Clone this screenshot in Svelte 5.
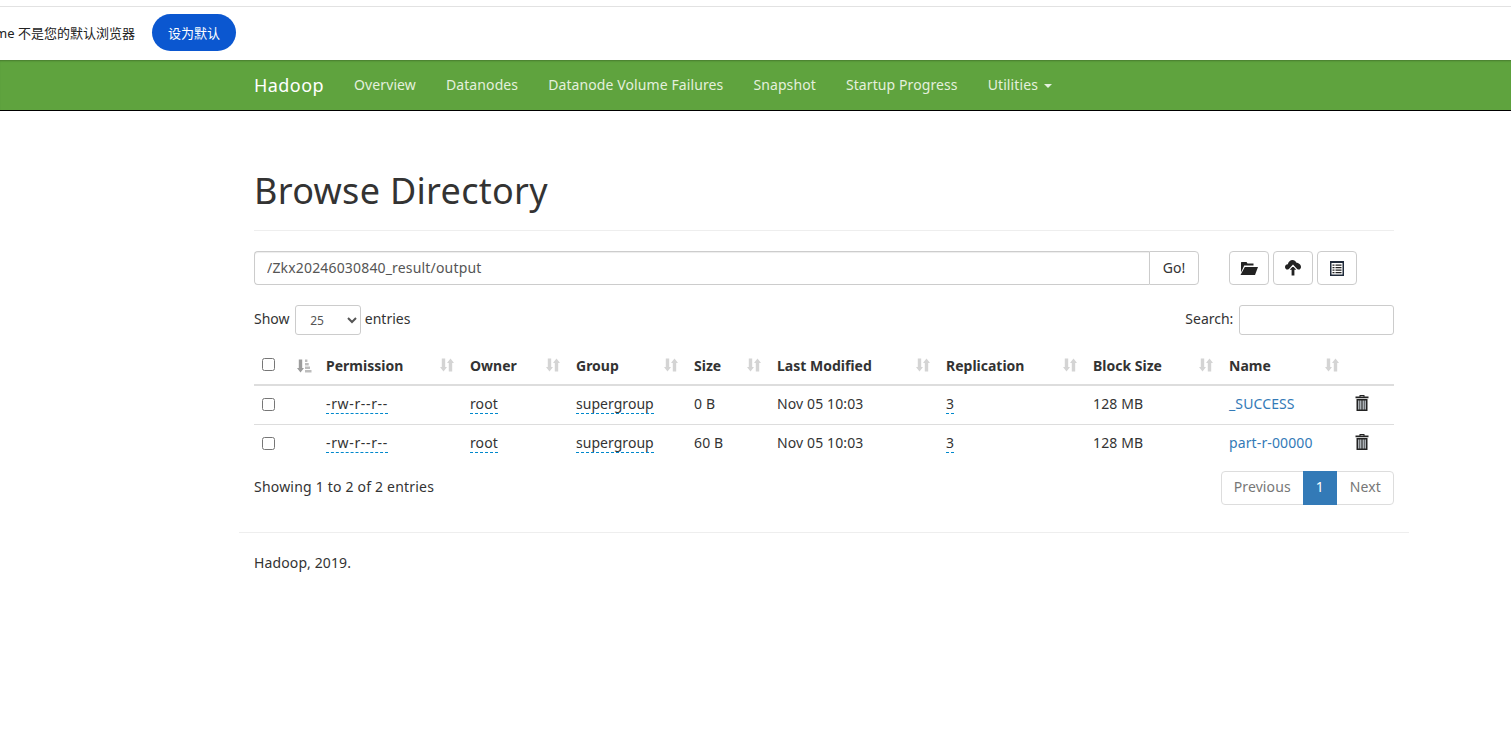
<script>
  const nav = ['Overview', 'Datanodes', 'Datanode Volume Failures', 'Snapshot', 'Startup Progress'];
  const cols = [
    ['Permission', 144], ['Owner', 106], ['Group', 118], ['Size', 83],
    ['Last Modified', 169], ['Replication', 147], ['Block Size', 136], ['Name', 126]
  ];
  const rows = [
    { size: '0 B', name: '_SUCCESS' },
    { size: '60 B', name: 'part-r-00000' }
  ];
</script>

{#snippet sortIcon(x)}
  <svg class="sort" style="left:{x}px" width="14" height="14" viewBox="0 0 14 14" fill="#d4d4d4">
    <path d="M1.800 0.500h3.400v8.500h1.800L3.500 13.500 0 9h1.800zM8.800 13.500h3.400V5H14L10.500 0.500 7 5h1.800z" />
  </svg>
{/snippet}

<div class="page">
  <div class="infobar">
    <div class="clip"><span>Google Chrome 不是您的默认浏览器</span></div>
    <button class="default">设为默认</button>
  </div>

  <nav class="navbar">
    <div class="container navrow">
      <a class="brand" href="#top">Hadoop</a>
      {#each nav as item}<a class="navlink" href="#top">{item}</a>{/each}
      <a class="navlink" href="#top">Utilities <i class="caret"></i></a>
    </div>
  </nav>

  <main class="container">
    <h1>Browse Directory</h1>

    <div class="pathrow">
      <div class="pathgroup">
        <input class="path" value="/Zkx20246030840_result/output" />
        <button class="btn go">Go!</button>
      </div>
      <div class="tools">
        <button class="btn tool" aria-label="Create directory">
          <svg width="18" height="13" viewBox="0 0 18 13" fill="#222"><path d="M1.500 0h5l1 1.500h6V3.500H4.200L1 10.500V.5zM4.800 5H18l-3 8H0.500z" /></svg>
        </button>
        <button class="btn tool" aria-label="Upload">
          <svg width="16" height="16" viewBox="0 0 16 16"><path fill="#222" d="M7.500 0c1.800 0 3.200 1 3.700 2.600C13.500 2.800 16 4.800 16 7c0 1.500-1 2.600-2.300 2.600H2.500C1 9.600 0 8.500 0 7 0 5.500 1.200 4.300 2.800 4.200 3.400 1.800 5.300 0 7.500 0z" /><path fill="#222" stroke="#fff" stroke-width="1.200" d="M8 5.300l4.600 5H10V16H6v-5.700H3.400z" /></svg>
        </button>
        <button class="btn tool" aria-label="List">
          <svg width="14" height="15" viewBox="0 0 14 15"><path fill="#1f2a3a" d="M0 0h14v15H0z" /><path fill="#fff" d="M1.500 2h11v11.500h-11z" /><path fill="#222" d="M2.500 3.500h2v1.300h-2zM5.500 3.500h6v1.300h-6zM2.500 6h2v1.300h-2zM5.500 6h6v1.300h-6zM2.500 8.500h2v1.300h-2zM5.500 8.500h6v1.300h-6zM2.500 11h2v1.300h-2zM5.500 11h6v1.300h-6z" /></svg>
        </button>
      </div>
    </div>

    <div class="controls">
      <label class="show">Show
        <select><option>25</option></select>
        entries</label>
      <label class="search">Search: <input /></label>
    </div>

    <table>
      <colgroup>
        <col style="width:35px" /><col style="width:29px" />
        {#each cols as c}<col style="width:{c[1]}px" />{/each}
        <col />
      </colgroup>
      <thead>
        <tr>
          <th class="center"><input type="checkbox" /></th>
          <th class="iconcell">
            <svg width="15" height="14" viewBox="0 0 15 14"><path fill="#9c9c9c" d="M1.800 0.500h3.400v8.500h1.800L3.500 13.500 0 9h1.800z" /><path fill="#bdbdbd" d="M8 .5h2.400v2.500H8zM8 4h3.700v2.500H8zM8 7.500h5v2.500H8zM8 11h6.500v2.500H8z" /></svg>
          </th>
          {#each cols as c}
            <th><span class="thwrap">{c[0]}{@render sortIcon(c[1] - 30)}</span></th>
          {/each}
          <th></th>
        </tr>
      </thead>
      <tbody>
        {#each rows as r}
          <tr>
            <td class="center"><input type="checkbox" /></td>
            <td></td>
            <td><span class="edit perm">-rw-r--r--</span></td>
            <td><span class="edit">root</span></td>
            <td><span class="edit group">supergroup</span></td>
            <td>{r.size}</td>
            <td>Nov 05 10:03</td>
            <td><span class="edit">3</span></td>
            <td>128 MB</td>
            <td><a class="file" href="#top">{r.name}</a></td>
            <td class="trash">
              <svg width="14" height="16" viewBox="0 0 14 16"><path fill="#222" d="M4.500 0h5v1.500H13.500V3.300H.5V1.500h4zM5.500 1v.5h3V1zM1.500 4h11v12h-11z" /><path fill="#cfd6dc" d="M3.200 5.500h1.200v9H3.200zM5.200 5.500h1.200v9H5.200zM7.600 5.500h1.200v9H7.600zM9.600 5.500h1.200v9H9.600z" /></svg>
            </td>
          </tr>
        {/each}
      </tbody>
    </table>

    <div class="foot">
      <div class="info">Showing 1 to 2 of 2 entries</div>
      <div class="pager">
        <a href="#top">Previous</a><a class="on" href="#top">1</a><a class="next" href="#top">Next</a>
      </div>
    </div>
  </main>

  <hr class="rule" />
  <footer class="container">Hadoop, 2019.</footer>
</div>

<style>
  :global(body) {
    margin: 0;
    background: #fff;
    overflow: hidden;
  }
  .page {
    font-family: "Noto Sans", "Noto Sans CJK SC", sans-serif;
    font-size: 14px;
    letter-spacing: .12px;
    color: #333;
    line-height: 20px;
  }
  .infobar {
    height: 53px;
    margin-top: 6px;
    border-top: 1px solid #e2e2e2;
    display: flex;
    align-items: center;
  }
  .clip {
    width: 135px;
    overflow: hidden;
    display: flex;
    justify-content: flex-end;
    white-space: nowrap;
    font-size: 13px;
    letter-spacing: 0;
    color: #222;
    margin-top: -2px;
  }
  .clip span { flex: none; }
  .default {
    margin-left: 17px;
    margin-top: -2px;
    width: 84px;
    height: 37px;
    border: 0;
    border-radius: 19px;
    background: #0b57d0;
    color: #fff;
    font: inherit;
    font-size: 13px;
    letter-spacing: 0;
    padding: 0;
  }
  .navbar {
    height: 50px;
    background: #5fa33e;
    border-bottom: 1px solid #000;
    box-shadow: inset 0 2px 2px -1px rgba(0, 0, 0, .25);
  }
  .container {
    width: 1140px;
    margin-left: 254px;
  }
  .navrow {
    display: flex;
    align-items: center;
    height: 50px;
  }
  .navrow a { text-decoration: none; }
  .brand {
    color: #fff;
    font-size: 18px;
    letter-spacing: .45px;
    margin-right: 30px;
  }
  .navlink {
    color: #e4f0dd;
    margin-right: 30px;
    letter-spacing: .1px;
  }
  .caret {
    display: inline-block;
    margin-left: 2px;
    vertical-align: middle;
    border-top: 4px solid;
    border-left: 4px solid transparent;
    border-right: 4px solid transparent;
  }
  h1 {
    margin: 0;
    padding-top: 55px;
    padding-bottom: 15px;
    border-bottom: 1px solid #eee;
    font-size: 36px;
    font-weight: 400;
    letter-spacing: .3px;
    line-height: 49px;
    color: #333;
  }
  .pathrow {
    display: flex;
    margin-top: 20px;
  }
  .pathgroup {
    display: flex;
    width: 945px;
  }
  .path {
    flex: 1;
    min-width: 0;
    height: 34px;
    box-sizing: border-box;
    border: 1px solid #ccc;
    border-right: 0;
    border-radius: 4px 0 0 4px;
    padding: 0 12px 2px;
    font: inherit;
    letter-spacing: .17px;
    color: #555;
    box-shadow: inset 0 1px 1px rgba(0, 0, 0, .075);
  }
  .btn {
    height: 34px;
    box-sizing: border-box;
    border: 1px solid #ccc;
    background: #fff;
    border-radius: 4px;
    font: inherit;
    color: #333;
    padding: 0;
    display: flex;
    align-items: center;
    justify-content: center;
  }
  .go {
    width: 50px;
    border-radius: 0 4px 4px 0;
  }
  .tools {
    display: flex;
    gap: 4px;
    margin-left: 30px;
  }
  .tool { width: 40px; }
  .controls {
    display: flex;
    justify-content: space-between;
    align-items: center;
    margin-top: 20px;
    height: 30px;
  }
  .show {
    margin-top: -2px;
    letter-spacing: 0;
  }
  .show select {
    width: 66px;
    height: 30px;
    box-sizing: border-box;
    margin: 0 0 0 2px;
    padding: 0 5px 0 10px;
    border: 1px solid #ccc;
    border-radius: 3px;
    background: #fff;
    font: inherit;
    font-size: 12px;
    color: #555;
    transform: translateY(1px);
  }
  .search {
    letter-spacing: 0;
  }
  .search input {
    width: 155px;
    height: 30px;
    box-sizing: border-box;
    margin-left: 2px;
    border: 1px solid #ccc;
    border-radius: 3px;
    vertical-align: middle;
  }
  table {
    width: 100%;
    table-layout: fixed;
    border-collapse: collapse;
    margin-top: 12px;
  }
  th {
    height: 38px;
    padding: 0 8px;
    box-sizing: border-box;
    text-align: left;
    border-bottom: 2px solid #ddd;
    font-weight: 700;
    letter-spacing: 0;
  }
  td {
    height: 39px;
    padding: 0 8px 2px;
    box-sizing: border-box;
    border-bottom: 1px solid #ddd;
  }
  tbody tr:last-child td { border-bottom: 0; }
  .center { padding: 0 0 0 8px; }
  th.center input { margin-top: -2px; }
  .center input {
    margin: 0;
    width: 13px;
    height: 13px;
    display: block;
  }
  .iconcell svg { display: block; }
  .thwrap {
    position: relative;
    display: block;
  }
  .sort {
    position: absolute;
    top: 2px;
  }
  .edit {
    border-bottom: 1px dashed #08c;
  }
  .perm { letter-spacing: .65px; }
  .group { letter-spacing: .04px; }
  .file {
    color: #337ab7;
    text-decoration: none;
  }
  .trash svg { display: block; margin-top: -2px; }
  .foot {
    display: flex;
    justify-content: space-between;
    margin-top: 8px;
  }
  .info {
    padding-top: 6px;
    letter-spacing: .2px;
  }
  .pager {
    display: flex;
    height: 34px;
    box-sizing: border-box;
    border: 1px solid #ddd;
    border-radius: 4px;
  }
  .pager a {
    padding: 6px 12px;
    color: #777;
    text-decoration: none;
    margin: -1px 0;
  }
  .pager .next { padding-left: 13px; }
  .pager .on {
    background: #337ab7;
    color: #fff;
    width: 10px;
    text-align: center;
  }
  .rule {
    width: 1170px;
    margin: 27px 0 0 239px;
    border: 0;
    border-top: 1px solid #eee;
  }
  footer {
    padding-top: 20px;
  }
</style>
